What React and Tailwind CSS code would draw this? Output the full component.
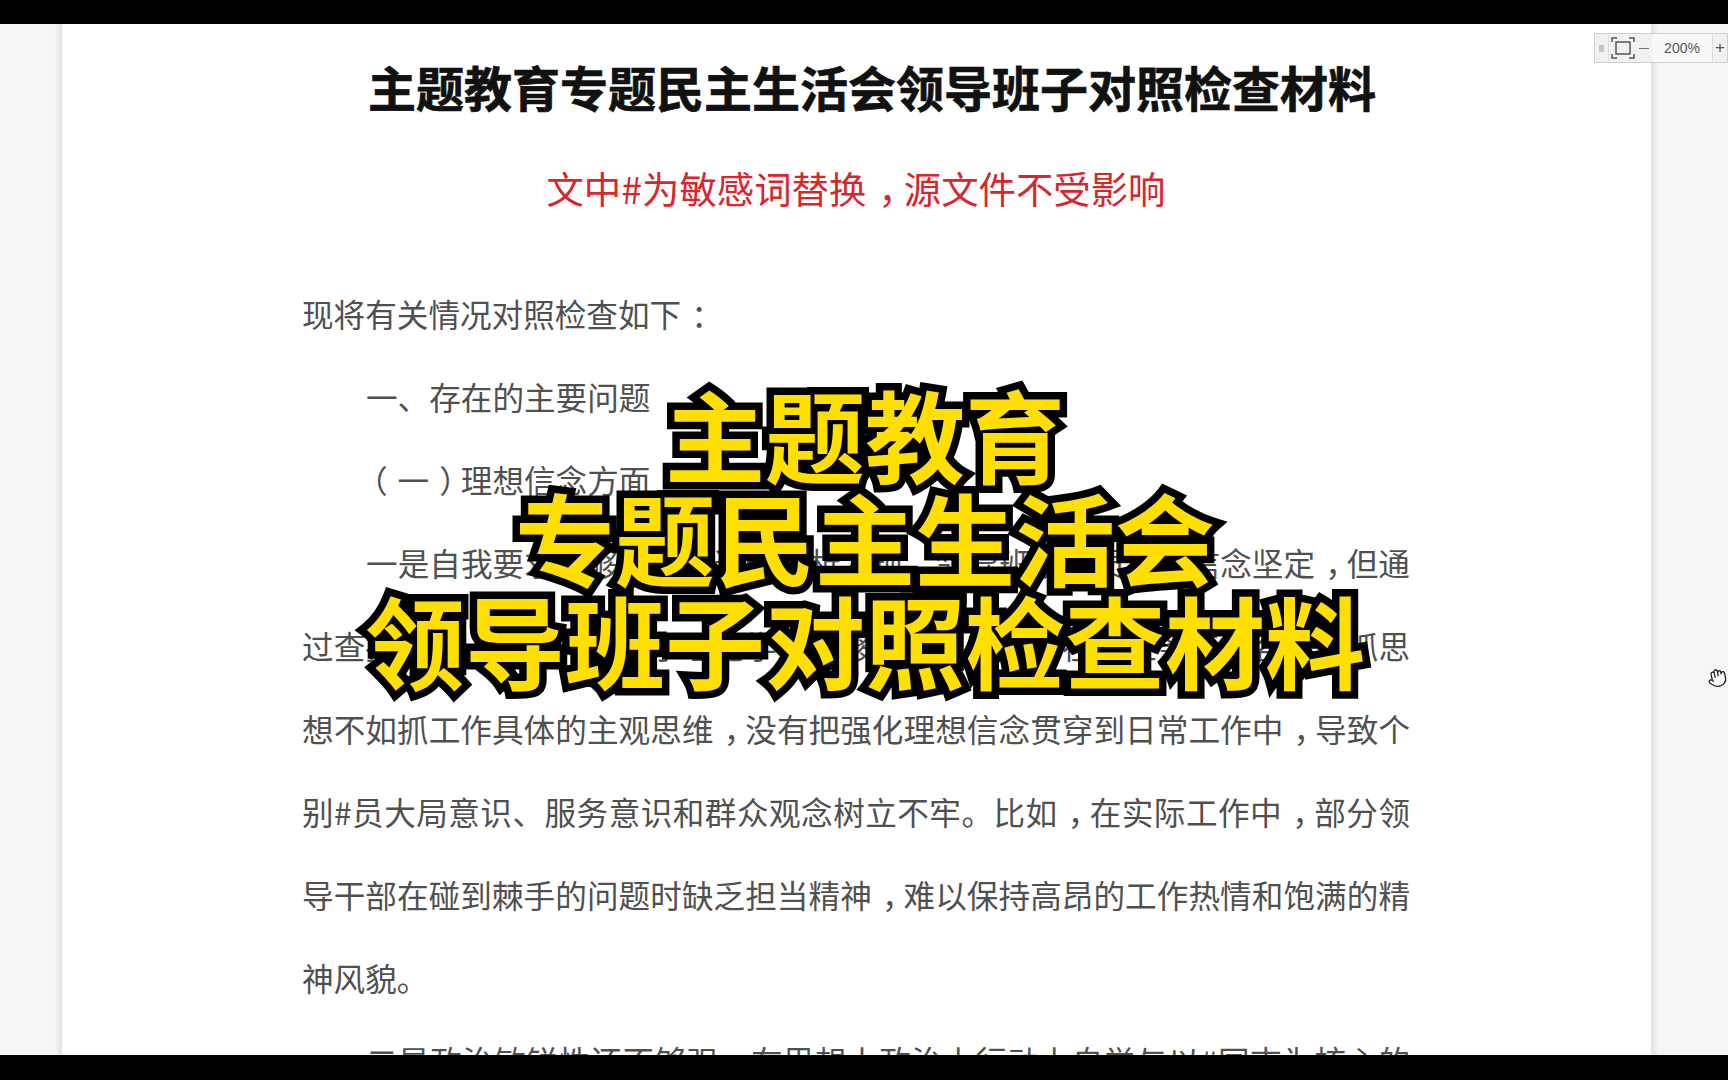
import React from "react";
import { Hand } from "lucide-react";

const cjk = "font-['Noto_Sans_CJK_SC','Noto_Sans',sans-serif]";

// the document's font centres its punctuation in the cell, Noto does not
function punct(text) {
  return text.split(/([，：（）])/).map((part, i) => {
    if (part === "，" || part === "：" || part === "）") {
      return (
        <span key={i} className="relative left-[0.32em]">
          {part}
        </span>
      );
    }
    if (part === "（") {
      return (
        <span key={i} className="relative -left-[0.32em]">
          {part}
        </span>
      );
    }
    return part;
  });
}

function Line({ text, indent }) {
  return (
    <div
      className={`h-[83px] leading-[83px] whitespace-nowrap [text-align:justify] [text-align-last:justify] ${
        indent ? "pl-16" : ""
      }`}
    >
      {punct(text)}
    </div>
  );
}

function ZoomBar() {
  return (
    <div className="absolute left-[1594px] top-[33px] flex h-[30px] w-[134px] items-center overflow-hidden border border-[#cfcfcf] bg-[#f1f1f1] font-['Liberation_Sans',sans-serif] text-[#555]">
      <div className="flex h-full w-[14px] items-center justify-center border-r border-[#dcdcdc]">
        <div className="h-[7px] w-[5px] bg-[#c4c4c4]"></div>
      </div>
      <svg width="26" height="24" viewBox="0 0 26 24" fill="none" stroke="#555" strokeWidth="1.5" className="ml-[1px] shrink-0">
        <path d="M2 6V2h5M19 2h5v4M24 18v4h-5M7 22H2v-4" />
        <rect x="6" y="6" width="14" height="12" />
      </svg>
      <div className="ml-[3px] h-px w-[10px] shrink-0 bg-[#777]"></div>
      <div className="ml-[3px] flex h-full w-[60px] shrink-0 items-center justify-center bg-[#f8f8f8] text-[14px]">200%</div>
      <div className="flex h-full flex-1 items-center justify-center border-l border-[#dcdcdc] text-[17px]">+</div>
    </div>
  );
}

export default function App() {
  return (
    <div className={`relative flex h-screen w-full flex-col overflow-hidden bg-black ${cjk}`}>
      <div className="h-6 shrink-0 bg-black"></div>

      <div className="flex min-h-0 flex-1 bg-[#f5f6f8]">
        <div className="w-[55px] shrink-0"></div>
        <div className="w-[7px] shrink-0 bg-gradient-to-r from-[#f3f4f6] to-[#dfe0e3]"></div>

        <div className="w-[1589px] shrink-0 overflow-hidden bg-white pl-[240px]">
          <div className="w-[1108px]">
            <h1 className="mt-[32px] h-[60px] whitespace-nowrap pl-8 text-center text-[48px] font-bold leading-[60px] text-[#111] [-webkit-text-stroke:0.7px_#111]">
              主题教育专题民主生活会领导班子对照检查材料
            </h1>
            <p className="mt-[47px] h-[50px] whitespace-nowrap text-center text-[37.4px] leading-[50px] text-[#d8262c]">
              {punct("文中#为敏感词替换，源文件不受影响")}
            </p>

            <div className="mt-[59px] text-[31.6px] text-[#505050]">
              <div className="h-[83px] leading-[83px]">{punct("现将有关情况对照检查如下：")}</div>
              <div className="h-[83px] pl-16 leading-[83px]">一、存在的主要问题</div>
              <div className="h-[83px] pl-16 leading-[83px]">{punct("（一）理想信念方面")}</div>
              <Line indent text="一是自我要求不够严格。通过剖析发现，领导班子成员理想信念坚定，但通" />
              <Line text="过查摆发现，部分同志对于理论学习不够重视，有时存在抓业务工作容易、抓思" />
              <Line text="想不如抓工作具体的主观思维，没有把强化理想信念贯穿到日常工作中，导致个" />
              <Line text="别#员大局意识、服务意识和群众观念树立不牢。比如，在实际工作中，部分领" />
              <Line text="导干部在碰到棘手的问题时缺乏担当精神，难以保持高昂的工作热情和饱满的精" />
              <div className="h-[83px] leading-[83px]">神风貌。</div>
              <Line indent text="二是政治敏锐性还不够强。在思想上政治上行动上自觉与以#同志为核心的" />
            </div>
          </div>
        </div>

        <div className="w-[8px] shrink-0 bg-gradient-to-r from-[#e0e1e4] to-[#f5f6f8]"></div>
        <div className="flex-1"></div>
      </div>

      <div className="h-[25px] shrink-0 bg-black"></div>

      <ZoomBar />

      <Hand
        size={20}
        strokeWidth={1.6}
        className="absolute left-[1707px] top-[668px] -rotate-12 fill-white text-[#222]"
      />

      <div className="absolute left-0 top-[381px] flex w-[1730px] flex-col items-center text-[100px] font-bold leading-[103px] text-[#ffdf00] [-webkit-text-stroke:15px_#000] [paint-order:stroke_fill]">
        <div>主题教育</div>
        <div>专题民主生活会</div>
        <div>领导班子对照检查材料</div>
      </div>
    </div>
  );
}
